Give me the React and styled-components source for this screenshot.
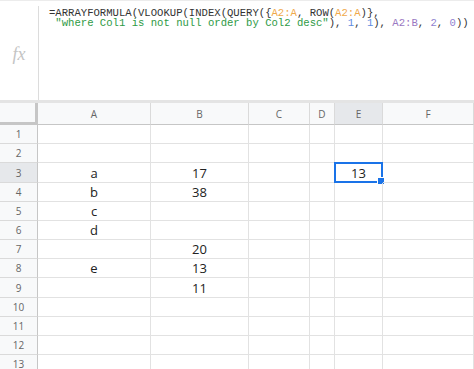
import styled, { createGlobalStyle } from "styled-components";

const GlobalStyle = createGlobalStyle`
  html, body {
    margin: 0;
    padding: 0;
    background: #fff;
    overflow: hidden;
  }
  body {
    font-family: "Open Sans", "Liberation Sans", sans-serif;
  }
`;

const Page = styled.div`
  width: 474px;
  height: 369px;
  overflow: hidden;
  display: flex;
  flex-direction: column;
`;

const FormulaBar = styled.div`
  flex-shrink: 0;
  height: 100px;
  display: flex;
  border-top: 1px solid #ececec;
  box-sizing: border-box;
`;

const FxBox = styled.div`
  width: 38px;
  margin-top: 5px;
  border-right: 1px solid #dcdcdc;
  display: flex;
  align-items: center;
  justify-content: center;
  padding-top: 2px;
  font-family: "Liberation Serif", serif;
  font-style: italic;
  font-size: 18px;
  color: #c4c4c4;
`;

const FormulaText = styled.div`
  padding: 7px 0 0 10px;
  font-family: "Liberation Mono", monospace;
  font-size: 10.6px;
  color: #333;
  white-space: pre;
`;

const FormulaLine = styled.div`
  height: 9.6px;
  line-height: 10px;
`;

const Tok = styled.span`
  color: ${(p) => p.$c};
`;

const Strip = styled.div`
  flex-shrink: 0;
  height: 3px;
  background: #e4e4e4;
`;

const Sheet = styled.div`
  flex-shrink: 0;
  display: grid;
  grid-template-columns: 38px 113px 98px 61px 25px 48px 1fr;
  grid-template-rows: 22px 19px 19px 20px 19px 19px 19px 19px 19px 20px 19px 19px 19px 19px;
`;

const Corner = styled.div`
  background: #f8f9fa;
  border-right: 3px solid #c6c6c6;
  border-bottom: 3px solid #c6c6c6;
  box-sizing: border-box;
`;

const ColHead = styled.div`
  display: flex;
  align-items: center;
  justify-content: center;
  font-size: 10px;
  color: #666;
  background: ${(p) => (p.$active ? "#e6e8eb" : "#f8f9fa")};
  border-right: 1px solid #dadada;
  border-bottom: 1px solid #c6c6c6;
  box-sizing: border-box;
`;

const RowHead = styled.div`
  display: flex;
  align-items: center;
  justify-content: center;
  font-size: 10px;
  color: #666;
  background: ${(p) => (p.$active ? "#e6e8eb" : "#f8f9fa")};
  border-right: 1px solid #c6c6c6;
  border-bottom: 1px solid #dadada;
  box-sizing: border-box;
`;

const Cell = styled.div`
  position: relative;
  display: flex;
  align-items: center;
  justify-content: center;
  font-size: 13px;
  color: #222;
  border-right: 1px solid #e2e2e2;
  border-bottom: 1px solid #e2e2e2;
  box-sizing: border-box;
`;

const Selection = styled.div`
  position: absolute;
  left: -1px;
  top: -1px;
  right: -1px;
  bottom: -1px;
  border: 2px solid #1a73e8;
  pointer-events: none;
`;

const Handle = styled.div`
  position: absolute;
  right: -4px;
  bottom: -4px;
  width: 6px;
  height: 6px;
  background: #1a73e8;
  border: 1px solid #fff;
`;

const columns = ["A", "B", "C", "D", "E", "F"];

const data = {
  3: { A: "a", B: "17", E: "13" },
  4: { A: "b", B: "38" },
  5: { A: "c" },
  6: { A: "d" },
  7: { B: "20" },
  8: { A: "e", B: "13" },
  9: { B: "11" },
};

export default function App() {
  const rows = Array.from({ length: 13 }, (_, i) => i + 1);

  return (
    <Page>
      <GlobalStyle />
      <FormulaBar>
        <FxBox>fx</FxBox>
        <FormulaText>
          <FormulaLine>
            {"=ARRAYFORMULA(VLOOKUP(INDEX(QUERY({"}
            <Tok $c="#f0a94a">A2:A</Tok>
            {", ROW("}
            <Tok $c="#f0a94a">A2:A</Tok>
            {")},"}
          </FormulaLine>
          <FormulaLine>
            {" "}
            <Tok $c="#2e9a45">"where Col1 is not null order by Col2 desc"</Tok>
            {"), "}
            <Tok $c="#5f8ce0">1</Tok>
            {", "}
            <Tok $c="#5f8ce0">1</Tok>
            {"), "}
            <Tok $c="#9a78c2">A2:B</Tok>
            {", "}
            <Tok $c="#8f7fd0">2</Tok>
            {", "}
            <Tok $c="#8f7fd0">0</Tok>
            {"))"}
          </FormulaLine>
        </FormulaText>
      </FormulaBar>
      <Strip />
      <Sheet>
        <Corner />
        {columns.map((c) => (
          <ColHead key={c} $active={c === "E"}>
            {c}
          </ColHead>
        ))}
        {rows.map((r) => [
          <RowHead key={`h${r}`} $active={r === 3}>
            {r}
          </RowHead>,
          ...columns.map((c) => (
            <Cell key={`${c}${r}`}>
              {data[r]?.[c] ?? ""}
              {r === 3 && c === "E" && (
                <Selection>
                  <Handle />
                </Selection>
              )}
            </Cell>
          )),
        ])}
      </Sheet>
    </Page>
  );
}
